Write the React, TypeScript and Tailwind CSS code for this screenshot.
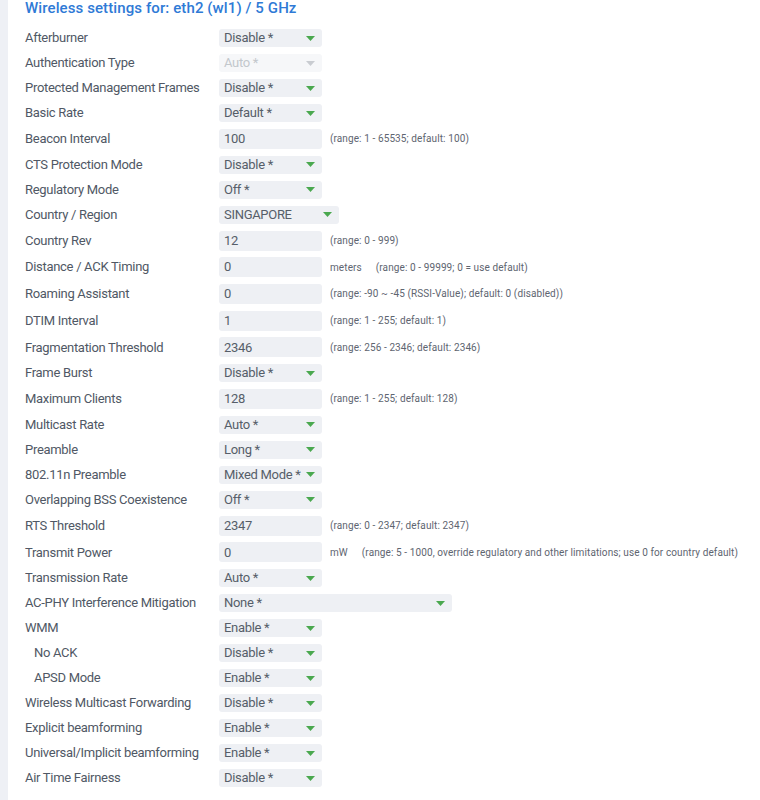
import React from "react";

type Row =
  | { label: string; kind: "select"; value: string; w?: number; disabled?: boolean; indent?: boolean }
  | { label: string; kind: "input"; value: string; unit?: string; hint?: string };

const rows: Row[] = [
  { label: "Afterburner", kind: "select", value: "Disable *" },
  { label: "Authentication Type", kind: "select", value: "Auto *", disabled: true },
  { label: "Protected Management Frames", kind: "select", value: "Disable *" },
  { label: "Basic Rate", kind: "select", value: "Default *" },
  { label: "Beacon Interval", kind: "input", value: "100", hint: "(range: 1 - 65535; default: 100)" },
  { label: "CTS Protection Mode", kind: "select", value: "Disable *" },
  { label: "Regulatory Mode", kind: "select", value: "Off *" },
  { label: "Country / Region", kind: "select", value: "SINGAPORE", w: 120 },
  { label: "Country Rev", kind: "input", value: "12", hint: "(range: 0 - 999)" },
  { label: "Distance / ACK Timing", kind: "input", value: "0", unit: "meters", hint: "(range: 0 - 99999; 0 = use default)" },
  { label: "Roaming Assistant", kind: "input", value: "0", hint: "(range: -90 ~ -45 (RSSI-Value); default: 0 (disabled))" },
  { label: "DTIM Interval", kind: "input", value: "1", hint: "(range: 1 - 255; default: 1)" },
  { label: "Fragmentation Threshold", kind: "input", value: "2346", hint: "(range: 256 - 2346; default: 2346)" },
  { label: "Frame Burst", kind: "select", value: "Disable *" },
  { label: "Maximum Clients", kind: "input", value: "128", hint: "(range: 1 - 255; default: 128)" },
  { label: "Multicast Rate", kind: "select", value: "Auto *" },
  { label: "Preamble", kind: "select", value: "Long *" },
  { label: "802.11n Preamble", kind: "select", value: "Mixed Mode *" },
  { label: "Overlapping BSS Coexistence", kind: "select", value: "Off *" },
  { label: "RTS Threshold", kind: "input", value: "2347", hint: "(range: 0 - 2347; default: 2347)" },
  { label: "Transmit Power", kind: "input", value: "0", unit: "mW", hint: "(range: 5 - 1000, override regulatory and other limitations; use 0 for country default)" },
  { label: "Transmission Rate", kind: "select", value: "Auto *" },
  { label: "AC-PHY Interference Mitigation", kind: "select", value: "None *", w: 233 },
  { label: "WMM", kind: "select", value: "Enable *" },
  { label: "No ACK", kind: "select", value: "Disable *", indent: true },
  { label: "APSD Mode", kind: "select", value: "Enable *", indent: true },
  { label: "Wireless Multicast Forwarding", kind: "select", value: "Disable *" },
  { label: "Explicit beamforming", kind: "select", value: "Enable *" },
  { label: "Universal/Implicit beamforming", kind: "select", value: "Enable *" },
  { label: "Air Time Fairness", kind: "select", value: "Disable *" },
];

function Arrow({ disabled }: { disabled?: boolean }) {
  return (
    <svg width="9" height="5" viewBox="0 0 9 5" className="shrink-0">
      <path d="M0 0 H9 L4.5 5 Z" fill={disabled ? "#c9ccd1" : "#4aa84f"} />
    </svg>
  );
}

export default function App() {
  return (
    <div
      className="flex min-h-[800px] bg-white"
      style={{ fontFamily: "Roboto, 'Noto Sans', sans-serif" }}
    >
      <div className="w-2 shrink-0 bg-[#eef0f5]" />
      <div className="flex-1 pl-[17px]">
        <div className="h-[25.5px] text-[15px] leading-[16px] font-medium text-[#2f7ad6] tracking-[0.1px]">
          Wireless settings for: eth2 (wl1) / 5 GHz
        </div>
        {rows.map((r, i) =>
          r.kind === "select" ? (
            <div key={i} className="flex h-[25px] items-center">
              <div
                className={`w-[194px] shrink-0 text-[13px] tracking-[-0.3px] text-[#505865] ${r.indent ? "pl-[9px]" : ""}`}
              >
                {r.label}
              </div>
              <div
                className={`flex h-[18px] items-center justify-between rounded-[3px] pl-[5px] pr-[7px] text-[13px] tracking-[-0.3px] ${
                  r.disabled ? "bg-[#f6f7f9] text-[#c3c7cc]" : "bg-[#eef0f4] text-[#565e69]"
                }`}
                style={{ width: r.w ?? 103 }}
              >
                <span>{r.value}</span>
                <Arrow disabled={r.disabled} />
              </div>
            </div>
          ) : (
            <div key={i} className="flex h-[26.7px] items-center">
              <div className="w-[194px] shrink-0 text-[13px] tracking-[-0.3px] text-[#505865]">{r.label}</div>
              <div className="flex h-[20px] w-[103px] items-center rounded-[3px] bg-[#eef0f4] pl-[5px] text-[13px] tracking-[-0.3px] text-[#565e69]">
                {r.value}
              </div>
              <div className="ml-2 flex items-center text-[10px] tracking-[0.1px] text-[#5e6570]">
                {r.unit && <span className="mr-[14px]">{r.unit}</span>}
                <span>{r.hint}</span>
              </div>
            </div>
          )
        )}
      </div>
    </div>
  );
}
